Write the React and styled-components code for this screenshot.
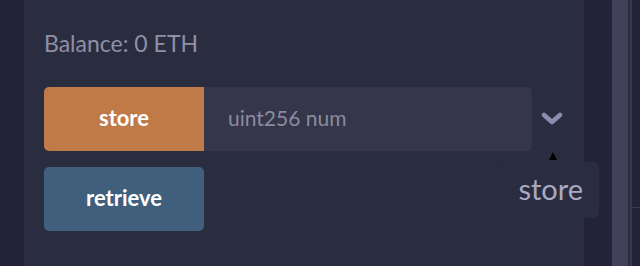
import React from 'react';
import styled, { createGlobalStyle } from 'styled-components';

const GlobalStyle = createGlobalStyle`
  html, body {
    margin: 0;
    padding: 0;
    background: #222336;
    font-family: 'Lato', 'Noto Sans', sans-serif;
  }
`;

const Page = styled.div`
  display: flex;
  height: 266px;
  width: 640px;
  overflow: hidden;
  background: #222336;
`;

const Panel = styled.section`
  position: relative;
  flex-shrink: 0;
  margin-left: 24px;
  width: 560px;
  background: #2a2c3f;
  padding: 28px 16px 0 20px;
  box-sizing: border-box;
`;

const Balance = styled.div`
  font-size: 23px;
  line-height: 30px;
  color: #8e90a6;
`;

const Row = styled.div`
  display: flex;
  align-items: center;
  margin-top: ${(p) => p.$top}px;
`;

const ActionButton = styled.button`
  flex-shrink: 0;
  width: 160px;
  height: 64px;
  border: none;
  background: ${(p) => p.$bg};
  color: #ffffff;
  font-family: inherit;
  font-weight: 700;
  font-size: 22px;
  border-radius: ${(p) => (p.$joined ? '5px 0 0 5px' : '5px')};
  padding: 0 0 4px 0;
`;

const ArgInput = styled.input`
  flex-shrink: 0;
  width: 328px;
  height: 64px;
  box-sizing: border-box;
  border: none;
  outline: none;
  background: #35364a;
  color: #8a8b9e;
  font-family: inherit;
  font-size: 21px;
  padding: 0 0 4px 24px;
  border-radius: 0 5px 5px 0;
  &::placeholder {
    color: #8a8b9e;
  }
`;

const Chevron = styled.div`
  flex-shrink: 0;
  width: 40px;
  display: flex;
  justify-content: center;
  align-items: center;
`;

const Tooltip = styled.div`
  position: absolute;
  left: 476px;
  top: 162px;
  width: 99px;
  height: 56px;
  box-sizing: border-box;
  background: #2a2c3f;
  border-radius: 6px;
  color: #a9aac2;
  font-size: 29px;
  display: flex;
  align-items: center;
  justify-content: flex-end;
  padding: 0 16px 4px 0;
  &::before {
    content: '';
    position: absolute;
    left: 49px;
    top: -10px;
    border-left: 4px solid transparent;
    border-right: 4px solid transparent;
    border-bottom: 8px solid #000;
  }
`;

const Gutter = styled.div`
  flex-shrink: 0;
  width: 28px;
  background: #222336;
`;

const Scrollbar = styled.div`
  flex-shrink: 0;
  width: 16px;
  background: #41425a;
`;

const Divider = styled.div`
  flex-shrink: 0;
  width: 2px;
  background: #2a2c3f;
`;

const Edge = styled.div`
  flex: 1;
  display: flex;
  flex-direction: column;
  border-left: 2px solid #393a52;
  background: #222336;
`;

const EdgeTop = styled.div`
  height: 207px;
  border-bottom: 1px solid #393a52;
`;

export default function App() {
  return (
    <>
      <GlobalStyle />
      <Page>
        <Panel>
          <Balance>Balance: 0 ETH</Balance>
          <Row $top={29}>
            <ActionButton $bg="#c07a47" $joined>store</ActionButton>
            <ArgInput placeholder="uint256 num" />
            <Chevron>
              <svg width="22" height="14" viewBox="0 0 22 14">
                <path d="M3 3 L11 10 L19 3" fill="none" stroke="#8a8fb0" strokeWidth="4.5" strokeLinecap="round" strokeLinejoin="round" />
              </svg>
            </Chevron>
          </Row>
          <Row $top={16}>
            <ActionButton $bg="#3f5f7d">retrieve</ActionButton>
          </Row>
          <Tooltip>store</Tooltip>
        </Panel>
        <Gutter />
        <Scrollbar />
        <Divider />
        <Edge>
          <EdgeTop />
        </Edge>
      </Page>
    </>
  );
}
